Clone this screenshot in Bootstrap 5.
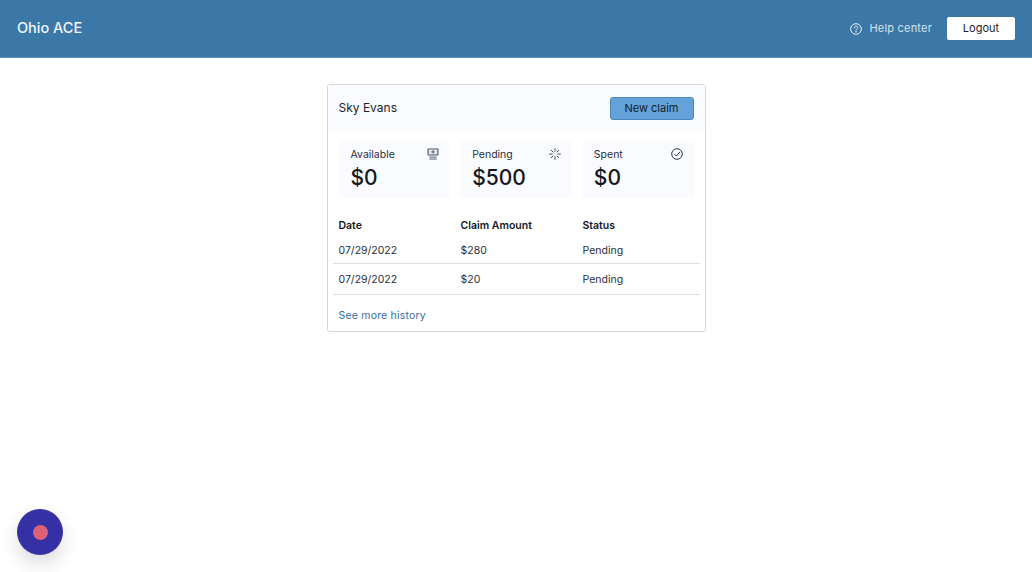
<!DOCTYPE html>
<html lang="en">
<head>
<meta charset="utf-8">
<title>Ohio ACE</title>
<link href="https://cdn.jsdelivr.net/npm/bootstrap@5.3.0/dist/css/bootstrap.min.css" rel="stylesheet">
<style>
body{font-family:Inter,"Liberation Sans",sans-serif;font-size:11px;color:#1a1f2b;background:#fff;height:572px;overflow:hidden}
.topbar{height:58px;background:#3b78a8;border-bottom:1px solid #5f93bd;padding:0 17px}
.brand-name{font-size:14.5px;font-weight:500;color:#f2f7fb;line-height:1}
.help-link{color:#d3e3ef;font-size:11px;letter-spacing:.2px;text-decoration:none;gap:7px;margin-right:15px}
.logout-btn{width:68px;height:23px;padding:0;background:#fff;border:0;border-radius:2px;font-size:11px;color:#1a1f2b}
.panel{width:379px;height:248px;margin:26px auto 0;border:1px solid #d5d7db;border-radius:3px;background:#fff}
.panel-head{height:46px;background:#fafbfe;padding:0 11px 0 11px}
.holder-name{font-size:12px}
.claim-btn{width:84px;height:23px;padding:0;background:#64a3d9;border:1px solid #4a86b8;border-radius:3px;font-size:11px;color:#10202f}
.stats{padding:10px 11px 0;gap:10px}
.stat{flex:1 1 0;height:57px;background:#fafbfe;border-radius:3px;padding:7px 11px 0 12px}
.stat-label{font-size:10.5px;line-height:14px;color:#2a2f3a}
.stat-value{font-size:21px;font-weight:500;line-height:26px;margin-top:3px;color:#14181f}
.hist{margin-top:17px}
.hist-row{display:grid;grid-template-columns:122px 122px 1fr;margin:0 5px;padding:0 6px;align-items:center}
.hist-head{height:21px;font-weight:600;font-size:10.5px;color:#14181f}
.hist-item{height:30.5px;border-bottom:1.5px solid #dcdee1;padding-top:3px;font-size:10.5px;color:#2a2f3a}
.hist-item.first{height:28px}
.more-link{display:block;color:#33709f;text-decoration:none;font-size:10.5px;letter-spacing:.2px;margin:13px 0 0 11px}
.chat-fab{position:fixed;left:17px;top:509px;width:46px;height:46px;border-radius:50%;background:#3531a5;box-shadow:0 8px 18px rgba(40,40,60,.16)}
.chat-dot{width:15px;height:15px;border-radius:50%;background:#dc6078}
</style>
</head>
<body>
<nav class="topbar d-flex align-items-center justify-content-between">
  <span class="brand-name">Ohio ACE</span>
  <div class="d-flex align-items-center">
    <a class="help-link d-flex align-items-center" href="#">
      <svg width="12" height="12" viewBox="0 0 12 12" fill="none" stroke="#e6f0f7" stroke-width="1"><circle cx="6" cy="6" r="5.3"/><path d="M4.4 4.7c0-2.1 3.3-2 3.3-.1 0 1.200-1.700 1.200-1.700 2.500" stroke-linecap="round"/><circle cx="6" cy="8.800" r=".4"/></svg>
      Help center
    </a>
    <button type="button" class="btn logout-btn">Logout</button>
  </div>
</nav>
<main class="panel">
  <div class="panel-head d-flex align-items-center justify-content-between">
    <span class="holder-name">Sky Evans</span>
    <button type="button" class="btn claim-btn">New claim</button>
  </div>
  <div class="stats d-flex">
    <div class="stat">
      <div class="d-flex justify-content-between align-items-start">
        <span class="stat-label">Available</span>
        <svg width="12" height="12" viewBox="0 0 12 12"><rect x=".3" y=".3" width="11.400" height="7.400" rx="1.200" fill="#7f8795"/><rect x="2" y="1.700" width="8" height="4.500" fill="#e8eaf0"/><path d="M6 2.300v3.200M4.400 3.900h3.200" stroke="#5f6775" stroke-width="1.100"/><rect x="2.300" y="8.500" width="7.400" height="1.300" fill="#7f8795"/><rect x="2.300" y="10.400" width="7.400" height="1.300" fill="#7f8795"/></svg>
      </div>
      <div class="stat-value">$0</div>
    </div>
    <div class="stat">
      <div class="d-flex justify-content-between align-items-start">
        <span class="stat-label">Pending</span>
        <svg width="12" height="12" viewBox="0 0 12 12" fill="none" stroke="#4a505c" stroke-width="1" stroke-linecap="round"><path d="M6 .6v2.600M6 8.800v2.600M.6 6h2.600M8.800 6h2.600M2.200 2.200l1.800 1.800M8 8l1.800 1.800M2.200 9.800L4 8M8 4l1.800-1.800"/></svg>
      </div>
      <div class="stat-value">$500</div>
    </div>
    <div class="stat">
      <div class="d-flex justify-content-between align-items-start">
        <span class="stat-label">Spent</span>
        <svg width="12" height="12" viewBox="0 0 12 12" fill="none" stroke="#2f3540" stroke-width="1"><circle cx="6" cy="6" r="5.300"/><path d="M3.500 6.200l1.800 1.800 3.400-3.900" stroke-linecap="round" stroke-linejoin="round"/></svg>
      </div>
      <div class="stat-value">$0</div>
    </div>
  </div>
  <div class="hist">
    <div class="hist-row hist-head"><span>Date</span><span>Claim Amount</span><span>Status</span></div>
    <div class="hist-row hist-item first"><span>07/29/2022</span><span>$280</span><span>Pending</span></div>
    <div class="hist-row hist-item"><span>07/29/2022</span><span>$20</span><span>Pending</span></div>
  </div>
  <a class="more-link" href="#">See more history</a>
</main>
<div class="chat-fab d-flex align-items-center justify-content-center"><span class="chat-dot"></span></div>
<script src="https://cdn.jsdelivr.net/npm/bootstrap@5.3.0/dist/js/bootstrap.bundle.min.js"></script>
</body>
</html>
